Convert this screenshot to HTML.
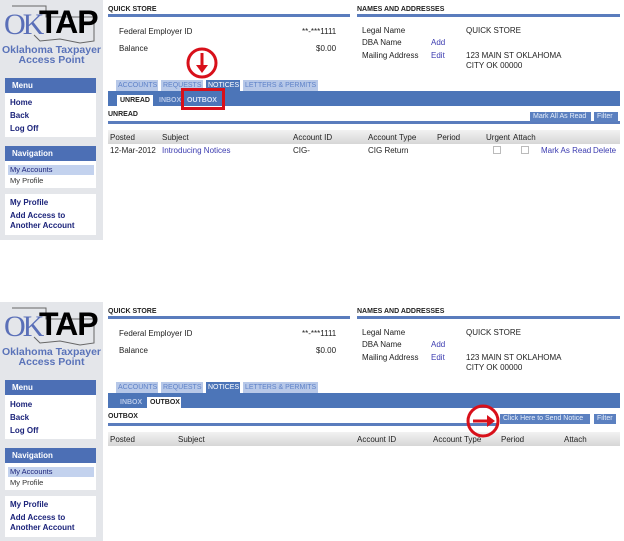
<!DOCTYPE html>
<html><head><meta charset="utf-8"><style>
*{margin:0;padding:0;box-sizing:border-box}
body{width:624px;height:541px;background:#fff;position:relative;overflow:hidden;font-family:"Liberation Sans",Arial,sans-serif;font-size:8px;color:#222}
.p{position:absolute;left:0;width:624px;height:240px}
.a{position:absolute;white-space:nowrap}
.side{position:absolute;left:0;top:0;width:103px;height:240px;background:#e4e6ea}
.box{position:absolute;left:5px;width:91px;background:#fff}
.hd{position:absolute;left:5px;width:91px;height:15px;background:#4c6fb5;color:#fff;font-weight:bold;font-size:8px;padding:3px 0 0 7px}
.lk{position:absolute;left:11px;color:#1b237a;font-weight:bold;font-size:8px}
.nv{position:absolute;left:11px;color:#1b237a;font-size:7.5px}
.sec{position:absolute;font-weight:bold;font-size:7px;color:#222}
.ln{position:absolute;height:3px;background:#5a7cbd}
.tab{position:absolute;height:11px;background:#b7c8e8;color:#5f82c8;font-size:7px;padding:2px 0 0 2px}
.bar{position:absolute;left:108px;width:512px;height:15px;background:#4c75b8}
.st{position:absolute;height:11px;font-size:7px;font-weight:bold;padding:2px 0 0 3px}
.btn{position:absolute;height:10px;background:#5b80c0;color:#e6eefa;font-size:7px;padding:1px 0 0 3px}
.gr{position:absolute;left:108px;width:512px;height:14px;background:linear-gradient(#f2f2f2,#d6d6d6)}
.bl{color:#3b3bb0}
.logo1{position:absolute;left:4px;top:9px;font-family:"Liberation Serif",serif;font-size:30px;line-height:32px;color:#5a6fb8;letter-spacing:-3px}
.logo2{position:absolute;left:39px;top:6px;font-family:"Liberation Sans",sans-serif;font-weight:bold;font-size:32px;line-height:32px;color:#000;letter-spacing:-1px}
.lt{position:absolute;left:-4px;width:111px;text-align:center;color:#5a73b9;font-weight:bold;font-size:10.5px;line-height:10px}
</style></head><body>

<!-- PANEL 1 -->
<div class="p" style="top:0">
<div class="side"></div>
<svg class="a" style="left:10px;top:3px" width="88" height="42"><path d="M2 3 H36 V14 H84 V38 L70 40 L50 36 L30 38 L24 32" fill="none" stroke="#666" stroke-width="1"/></svg>
<div class="logo1">OK</div><div class="logo2">TAP</div>
<div class="lt" style="top:45px">Oklahoma Taxpayer</div>
<div class="lt" style="top:55px">Access Point</div>
<div class="hd" style="top:78px">Menu</div>
<div class="box" style="top:93px;height:44px"></div>
<div class="lk" style="top:98px;left:10px">Home</div>
<div class="lk" style="top:111px;left:10px">Back</div>
<div class="lk" style="top:124px;left:10px">Log Off</div>
<div class="hd" style="top:146px">Navigation</div>
<div class="box" style="top:161px;height:27px"></div>
<div class="a" style="left:8px;top:165px;width:86px;height:10px;background:#c3d2ee"></div>
<div class="nv" style="top:165px;left:10px">My Accounts</div>
<div class="nv" style="top:176px;left:10px;color:#333">My Profile</div>
<div class="box" style="top:194px;height:41px"></div>
<div class="lk" style="top:198px;left:10px">My Profile</div>
<div class="lk" style="top:211px;left:10px">Add Access to</div>
<div class="lk" style="top:221px;left:10px">Another Account</div>

<div class="sec" style="left:108px;top:6px">QUICK STORE</div>
<div class="ln" style="left:108px;top:14px;width:242px"></div>
<div class="sec" style="left:357px;top:6px">NAMES AND ADDRESSES</div>
<div class="ln" style="left:357px;top:14px;width:263px"></div>
<div class="a" style="left:119px;top:27px">Federal Employer ID</div>
<div class="a" style="left:302px;top:27px">**-***1111</div>
<div class="a" style="left:119px;top:44px">Balance</div>
<div class="a" style="left:316px;top:44px">$0.00</div>
<div class="a" style="left:362px;top:26px">Legal Name</div>
<div class="a" style="left:466px;top:26px">QUICK STORE</div>
<div class="a" style="left:362px;top:38px">DBA Name</div>
<div class="a bl" style="left:431px;top:38px">Add</div>
<div class="a" style="left:362px;top:51px">Mailing Address</div>
<div class="a bl" style="left:431px;top:51px">Edit</div>
<div class="a" style="left:466px;top:51px">123 MAIN ST OKLAHOMA</div>
<div class="a" style="left:466px;top:61px">CITY OK 00000</div>

<div class="tab" style="left:116px;top:80px;width:42px">ACCOUNTS</div>
<div class="tab" style="left:161px;top:80px;width:42px">REQUESTS</div>
<div class="tab" style="left:206px;top:80px;width:34px;background:#4c75b8;color:#fff">NOTICES</div>
<div class="tab" style="left:243px;top:80px;width:75px">LETTERS &amp; PERMITS</div>
<div class="bar" style="top:91px"></div>
<div class="st" style="left:117px;top:95px;width:36px;background:#fff;color:#222">UNREAD</div>
<div class="st" style="left:156px;top:95px;color:#b7c8e8">INBOX</div>
<div class="st" style="left:184px;top:95px;color:#d8e2f4">OUTBOX</div>
<div class="sec" style="left:108px;top:111px">UNREAD</div>
<div class="ln" style="left:108px;top:121px;width:512px"></div>
<div class="btn" style="left:530px;top:112px;width:61px">Mark All As Read</div>
<div class="btn" style="left:594px;top:112px;width:24px">Filter</div>
<div class="gr" style="top:130px"></div>
<div class="a" style="left:110px;top:133px">Posted</div>
<div class="a" style="left:162px;top:133px">Subject</div>
<div class="a" style="left:293px;top:133px">Account ID</div>
<div class="a" style="left:368px;top:133px">Account Type</div>
<div class="a" style="left:437px;top:133px">Period</div>
<div class="a" style="left:486px;top:133px">Urgent</div>
<div class="a" style="left:513px;top:133px">Attach</div>
<div class="a" style="left:110px;top:146px">12-Mar-2012</div>
<div class="a bl" style="left:162px;top:146px">Introducing Notices</div>
<div class="a" style="left:293px;top:146px">CIG-</div>
<div class="a" style="left:368px;top:146px">CIG Return</div>
<div class="a" style="left:493px;top:146px;width:8px;height:8px;border:1px solid #bbb"></div>
<div class="a" style="left:521px;top:146px;width:8px;height:8px;border:1px solid #bbb"></div>
<div class="a bl" style="left:541px;top:146px">Mark As Read</div>
<div class="a bl" style="left:593px;top:146px">Delete</div>

<svg class="a" style="left:185px;top:47px" width="34" height="34"><circle cx="17" cy="16" r="14" fill="none" stroke="#d8101a" stroke-width="3"/><path d="M17 6 V20" stroke="#d8101a" stroke-width="3"/><path d="M11 18 L17 26 L23 18 Z" fill="#d8101a"/></svg>
<div class="a" style="left:181px;top:88px;width:44px;height:22px;border:3px solid #d8101a"></div>
</div>

<!-- PANEL 2 -->
<div class="p" style="top:302px;height:239px">
<div class="side" style="height:239px"></div>
<svg class="a" style="left:10px;top:3px" width="88" height="42"><path d="M2 3 H36 V14 H84 V38 L70 40 L50 36 L30 38 L24 32" fill="none" stroke="#666" stroke-width="1"/></svg>
<div class="logo1">OK</div><div class="logo2">TAP</div>
<div class="lt" style="top:45px">Oklahoma Taxpayer</div>
<div class="lt" style="top:55px">Access Point</div>
<div class="hd" style="top:78px">Menu</div>
<div class="box" style="top:93px;height:44px"></div>
<div class="lk" style="top:98px;left:10px">Home</div>
<div class="lk" style="top:111px;left:10px">Back</div>
<div class="lk" style="top:124px;left:10px">Log Off</div>
<div class="hd" style="top:146px">Navigation</div>
<div class="box" style="top:161px;height:27px"></div>
<div class="a" style="left:8px;top:165px;width:86px;height:10px;background:#c3d2ee"></div>
<div class="nv" style="top:165px;left:10px">My Accounts</div>
<div class="nv" style="top:176px;left:10px;color:#333">My Profile</div>
<div class="box" style="top:194px;height:41px"></div>
<div class="lk" style="top:198px;left:10px">My Profile</div>
<div class="lk" style="top:211px;left:10px">Add Access to</div>
<div class="lk" style="top:221px;left:10px">Another Account</div>

<div class="sec" style="left:108px;top:6px">QUICK STORE</div>
<div class="ln" style="left:108px;top:14px;width:242px"></div>
<div class="sec" style="left:357px;top:6px">NAMES AND ADDRESSES</div>
<div class="ln" style="left:357px;top:14px;width:263px"></div>
<div class="a" style="left:119px;top:27px">Federal Employer ID</div>
<div class="a" style="left:302px;top:27px">**-***1111</div>
<div class="a" style="left:119px;top:44px">Balance</div>
<div class="a" style="left:316px;top:44px">$0.00</div>
<div class="a" style="left:362px;top:26px">Legal Name</div>
<div class="a" style="left:466px;top:26px">QUICK STORE</div>
<div class="a" style="left:362px;top:38px">DBA Name</div>
<div class="a bl" style="left:431px;top:38px">Add</div>
<div class="a" style="left:362px;top:51px">Mailing Address</div>
<div class="a bl" style="left:431px;top:51px">Edit</div>
<div class="a" style="left:466px;top:51px">123 MAIN ST OKLAHOMA</div>
<div class="a" style="left:466px;top:61px">CITY OK 00000</div>

<div class="tab" style="left:116px;top:80px;width:42px">ACCOUNTS</div>
<div class="tab" style="left:161px;top:80px;width:42px">REQUESTS</div>
<div class="tab" style="left:206px;top:80px;width:34px;background:#4c75b8;color:#fff">NOTICES</div>
<div class="tab" style="left:243px;top:80px;width:75px">LETTERS &amp; PERMITS</div>
<div class="bar" style="top:91px"></div>
<div class="st" style="left:117px;top:95px;color:#b7c8e8">INBOX</div>
<div class="st" style="left:147px;top:95px;width:34px;background:#fff;color:#222">OUTBOX</div>
<div class="sec" style="left:108px;top:111px">OUTBOX</div>
<div class="ln" style="left:108px;top:121px;width:390px"></div>
<div class="btn" style="left:500px;top:112px;width:90px">Click Here to Send Notice</div>
<div class="btn" style="left:594px;top:112px;width:22px">Filter</div>
<div class="gr" style="top:130px"></div>
<div class="a" style="left:110px;top:133px">Posted</div>
<div class="a" style="left:178px;top:133px">Subject</div>
<div class="a" style="left:357px;top:133px">Account ID</div>
<div class="a" style="left:433px;top:133px">Account Type</div>
<div class="a" style="left:501px;top:133px">Period</div>
<div class="a" style="left:564px;top:133px">Attach</div>

<svg class="a" style="left:465px;top:101px" width="36" height="36"><circle cx="18" cy="18" r="15" fill="none" stroke="#d8101a" stroke-width="3"/><path d="M8 18 H24" stroke="#d8101a" stroke-width="3"/><path d="M22 12 L30 18 L22 24 Z" fill="#d8101a"/></svg>
</div>
</body></html>
